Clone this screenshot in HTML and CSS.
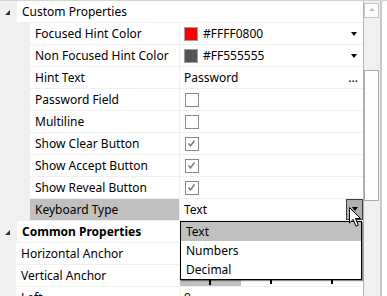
FILE: index.html
```html
<!DOCTYPE html>
<html lang="en">
<head>
    <meta charset="UTF-8">
    <title>Property Grid</title>
    <link rel="stylesheet" href="styles.css">
</head>
<body>
    <div class="panel">
        <div class="grid">
            <div class="row cat">
                <div class="cat-gutter"><span class="tri"></span></div>
                <div class="cat-name">Custom Properties</div>
            </div>
            <div class="row">
                <div class="gut"></div>
                <div class="name">Focused Hint Color</div>
                <div class="value"><span class="swatch red"></span>#FFFF0800<span class="caret"></span></div>
            </div>
            <div class="row">
                <div class="gut"></div>
                <div class="name">Non Focused Hint Color</div>
                <div class="value"><span class="swatch grey"></span>#FF555555<span class="caret"></span></div>
            </div>
            <div class="row">
                <div class="gut"></div>
                <div class="name">Hint Text</div>
                <div class="value">Password<span class="dots">...</span></div>
            </div>
            <div class="row">
                <div class="gut"></div>
                <div class="name">Password Field</div>
                <div class="value"><span class="check"></span></div>
            </div>
            <div class="row">
                <div class="gut"></div>
                <div class="name">Multiline</div>
                <div class="value"><span class="check"></span></div>
            </div>
            <div class="row">
                <div class="gut"></div>
                <div class="name">Show Clear Button</div>
                <div class="value"><span class="check"><svg width="13" height="13" viewBox="0 0 13 13"><path d="M3.5 6.5 L5.5 8.8 L9.5 3.5" fill="none" stroke="#777" stroke-width="1.4"/></svg></span></div>
            </div>
            <div class="row">
                <div class="gut"></div>
                <div class="name">Show Accept Button</div>
                <div class="value"><span class="check"><svg width="13" height="13" viewBox="0 0 13 13"><path d="M3.5 6.5 L5.5 8.8 L9.5 3.5" fill="none" stroke="#777" stroke-width="1.4"/></svg></span></div>
            </div>
            <div class="row">
                <div class="gut"></div>
                <div class="name">Show Reveal Button</div>
                <div class="value"><span class="check"><svg width="13" height="13" viewBox="0 0 13 13"><path d="M3.5 6.5 L5.5 8.8 L9.5 3.5" fill="none" stroke="#777" stroke-width="1.4"/></svg></span></div>
            </div>
            <div class="row">
                <div class="gut"></div>
                <div class="name selected">Keyboard Type</div>
                <div class="value">Text<span class="drop-btn"><span class="caret dark"></span></span></div>
            </div>
            <div class="row cat">
                <div class="cat-gutter"><span class="tri"></span></div>
                <div class="cat-name bold">Common Properties</div>
            </div>
            <div class="row">
                <div class="gut short"></div>
                <div class="name wide">Horizontal Anchor</div>
                <div class="value"></div>
            </div>
            <div class="row">
                <div class="gut short"></div>
                <div class="name wide">Vertical Anchor</div>
                <div class="value segments">
                    <span class="seg on"><span class="mark"></span></span>
                    <span class="seg"><span class="mark tip"></span></span>
                    <span class="seg"><span class="mark tip"></span></span>
                </div>
            </div>
            <div class="row">
                <div class="gut short"></div>
                <div class="name wide">Left</div>
                <div class="value">0</div>
            </div>
        </div>
        <div class="scrollbar">
            <div class="arrow-up"><span></span></div>
            <div class="thumb"></div>
        </div>
        <div class="edge"></div>

        <div class="popup">
            <div class="item active">Text</div>
            <div class="item">Numbers</div>
            <div class="item">Decimal</div>
        </div>

        <svg class="cursor" width="13" height="21" viewBox="0 0 13 21">
            <path d="M0.5 0.5 L0.5 16 L4.2 12.4 L7 19.2 L9.3 18.2 L6.5 11.5 L11.5 11.5 Z" fill="#fff" stroke="#000" stroke-width="1"/>
        </svg>
    </div>
</body>
</html>
```

FILE: styles.css
```css
body {
    margin: 0;
    background-color: #fff;
    font-family: "Noto Sans", "Open Sans", sans-serif;
    font-size: 12px;
    color: #000;
}

.panel {
    position: relative;
    display: flex;
    height: 296px;
    overflow: hidden;
    border-top: 1px solid #d4d4d4;
}

.grid {
    flex: 0 0 362px;
    border-right: 1px solid #b4b4b4;
}

.row {
    display: flex;
    height: 21px;
    border-bottom: 1px solid #f0f0f0;
    line-height: 21px;
}

.cat {
    background-color: #fff;
}

.cat-gutter {
    width: 17px;
    background-color: #f0f0f0;
    position: relative;
}

.tri {
    position: absolute;
    left: 5px;
    top: 9px;
    width: 0;
    height: 0;
    border-left: 5px solid transparent;
    border-bottom: 5px solid #333;
}

.cat-name {
    padding-left: 5px;
}

.bold {
    font-weight: bold;
}

.gut {
    width: 30px;
    background-color: #f0f0f0;
}

.gut.short {
    width: 16px;
}

.name {
    width: 144px;
    padding-left: 5px;
    border-right: 1px solid #f0f0f0;
    white-space: nowrap;
    overflow: hidden;
}

.name.wide {
    width: 158px;
}

.name.selected {
    background-color: #c0c0c0;
}

.value {
    flex: 1;
    display: flex;
    align-items: center;
    padding-left: 4px;
    position: relative;
}

.swatch {
    width: 12px;
    height: 12px;
    border: 1px solid #a0a0a0;
    margin-right: 5px;
}

.swatch.red {
    background-color: #ff0000;
}

.swatch.grey {
    background-color: #555555;
}

.caret {
    position: absolute;
    right: 6px;
    top: 9px;
    width: 0;
    height: 0;
    border-left: 3.5px solid transparent;
    border-right: 3.5px solid transparent;
    border-top: 4px solid #000;
}

.dots {
    position: absolute;
    right: 5px;
    top: 0;
}

.check {
    width: 12px;
    height: 12px;
    border: 1px solid #8a8a8a;
    margin-left: 1px;
    background-color: #fff;
}

.check svg {
    display: block;
    margin: -1px 0 0 -1px;
}

.drop-btn {
    position: absolute;
    right: 0;
    top: 0;
    width: 15px;
    height: 19px;
    background-color: #b0b0b0;
    border: 1px solid #404040;
}

.drop-btn .caret {
    right: 4px;
    top: 7px;
}

.segments {
    padding-left: 0;
    align-items: stretch;
}

.seg {
    width: 61px;
    position: relative;
}

.seg.on {
    background-color: #c0c0c0;
}

.mark {
    position: absolute;
    left: 29px;
    bottom: 1px;
    width: 2px;
    height: 7px;
    background-color: #000;
}

.mark.tip {
    height: 4px;
    bottom: 2px;
}

.scrollbar {
    width: 16px;
    background-color: #f0f0f0;
    display: flex;
    flex-direction: column;
    padding-top: 2px;
}

.arrow-up {
    height: 13px;
    margin: 0 1px 0 0;
    border: 1px solid #c6c6c6;
    background-color: #fcfcfc;
    position: relative;
}

.arrow-up span {
    position: absolute;
    left: 4px;
    top: 4px;
    border-left: 3px solid transparent;
    border-right: 3px solid transparent;
    border-bottom: 3px solid #c0c0c0;
}

.thumb {
    height: 129px;
    margin: 52px 1px 0 0;
    border: 1px solid #a8a8a8;
    background-color: #fff;
}

.edge {
    width: 1px;
    border-left: 2px solid #c8c8c8;
}

.popup {
    position: absolute;
    left: 180px;
    top: 220px;
    width: 180px;
    border: 1px solid #000;
    background-color: #fff;
    box-shadow: 1px 1px 1px rgba(0, 0, 0, 0.45);
}

.item {
    height: 19px;
    line-height: 19px;
    padding-left: 5px;
}

.item.active {
    background-color: #c0c0c0;
}

.cursor {
    position: absolute;
    left: 349px;
    top: 206px;
}
```
